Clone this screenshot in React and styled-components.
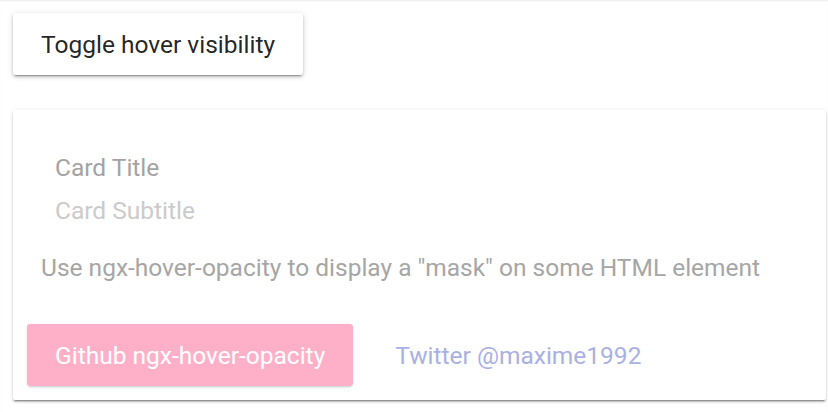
import React, { useState } from 'react'
import styled, { createGlobalStyle } from 'styled-components'

const GlobalStyle = createGlobalStyle`
  html, body {
    margin: 0;
    padding: 0;
    background: #fff;
    font-family: Roboto, "Liberation Sans", sans-serif;
  }
`;

const Page = styled.div`
  width: 828px;
  height: 412px;
  overflow: hidden;
  position: relative;
  box-shadow: inset 0 2px 2px -1px rgba(0, 0, 0, 0.08);
`;

const Toolbar = styled.div`
  padding: 13px 0 0 13px;
  height: 110px;
  box-sizing: border-box;
`;

const RaisedButton = styled.button`
  height: 62px;
  padding: 0 28px;
  border: none;
  border-radius: 3px;
  background: #fff;
  color: rgba(0, 0, 0, 0.87);
  font-family: Roboto, "Liberation Sans", sans-serif;
  font-size: 24.5px;
  box-shadow: 0 3px 1px -2px rgba(0,0,0,.25), 0 2px 3px 0 rgba(0,0,0,.2), 0 1px 7px 0 rgba(0,0,0,.12);
  cursor: pointer;
`;

const Card = styled.div`
  margin: 0 2px 0 13px;
  height: 290px;
  background: #fff;
  border-radius: 2px;
  box-shadow: 0 3px 1px -2px rgba(0,0,0,.25), 0 2px 2px 0 rgba(0,0,0,.2), 0 1px 5px 0 rgba(0,0,0,.1);
  opacity: ${(p) => (p.$faded ? 0.35 : 1)};
  display: flex;
  flex-direction: column;
`;

const Header = styled.div`
  padding: 43px 0 0 42px;
  display: flex;
  flex-direction: column;
`;

const Title = styled.div`
  font-size: 24.5px;
  line-height: 30px;
  color: #a3a3a3;
`;

const Subtitle = styled.div`
  margin-top: 13px;
  font-size: 24.5px;
  line-height: 30px;
  color: #cbcbcb;
`;

const Body = styled.p`
  margin: 27px 0 0 28px;
  font-size: 24.5px;
  line-height: 30px;
  color: #a6a6a6;
`;

const Actions = styled.div`
  margin-top: 41px;
  padding-left: 14px;
  display: flex;
  align-items: center;
  gap: 14px;
`;

const ActionButton = styled.button`
  height: 62px;
  padding: 0 28px;
  border: none;
  border-radius: 3px;
  font-family: Roboto, "Liberation Sans", sans-serif;
  font-size: 24.5px;
  background: ${(p) => (p.$primary ? '#ffb0c9' : 'transparent')};
  color: ${(p) => (p.$primary ? '#fff' : '#a9b1e3')};
  box-shadow: ${(p) =>
    p.$primary
      ? '0 3px 1px -2px rgba(0,0,0,.08), 0 2px 2px 0 rgba(0,0,0,.06), 0 1px 5px 0 rgba(0,0,0,.05)'
      : 'none'};
  cursor: pointer;
`;

export default function App() {
  const [hidden, setHidden] = useState(false)
  return (
    <Page>
      <GlobalStyle />
      <Toolbar>
        <RaisedButton onClick={() => setHidden(!hidden)}>Toggle hover visibility</RaisedButton>
      </Toolbar>
      <Card $faded={hidden}>
        <Header>
          <Title>Card Title</Title>
          <Subtitle>Card Subtitle</Subtitle>
        </Header>
        <Body>Use ngx-hover-opacity to display a "mask" on some HTML element</Body>
        <Actions>
          <ActionButton $primary>Github ngx-hover-opacity</ActionButton>
          <ActionButton>Twitter @maxime1992</ActionButton>
        </Actions>
      </Card>
    </Page>
  )
}
